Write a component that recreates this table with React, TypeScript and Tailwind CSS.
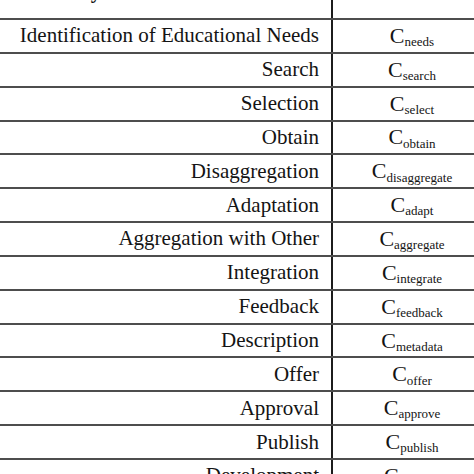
import React from "react";

const rows: [string, string][] = [
  ["Identification of Educational Needs", "needs"],
  ["Search", "search"],
  ["Selection", "select"],
  ["Obtain", "obtain"],
  ["Disaggregation", "disaggregate"],
  ["Adaptation", "adapt"],
  ["Aggregation with Other", "aggregate"],
  ["Integration", "integrate"],
  ["Feedback", "feedback"],
  ["Description", "metadata"],
  ["Offer", "offer"],
  ["Approval", "approve"],
  ["Publish", "publish"],
  ["Development", "develop"],
];

export default function App() {
  return (
    <div className="w-[474px] h-[474px] overflow-hidden bg-white text-[#141414] font-['Liberation_Serif','Times_New_Roman',serif]">
      <div className="w-[491px]">
        {/* header row, mostly cropped off */}
        <div className="flex h-[20px] border-b-2 border-[#4d4d4d] overflow-hidden">
          <div className="w-[333px] shrink-0 border-r-2 border-[#1c1c1c] flex items-end pl-[30px]">
            <span className="text-[21px] leading-none font-bold mb-[16px]">Activity</span>
          </div>
          <div className="flex-1 flex items-end justify-center">
            <span className="text-[21px] leading-none font-bold mb-[16px]">Cost</span>
          </div>
        </div>

        {rows.map(([label, sub]) => (
          <div key={label} className="flex h-[33.85px] border-b-2 border-[#4d4d4d]">
            <div className="w-[333px] shrink-0 border-r-2 border-[#1c1c1c] flex items-center justify-end pr-[12px]">
              <span className="text-[21px] leading-none whitespace-nowrap">{label}</span>
            </div>
            <div className="flex-1 flex items-center justify-center">
              <span className="text-[22px] leading-none whitespace-nowrap">
                C<sub className="text-[13px]">{sub}</sub>
              </span>
            </div>
          </div>
        ))}
      </div>
    </div>
  );
}
